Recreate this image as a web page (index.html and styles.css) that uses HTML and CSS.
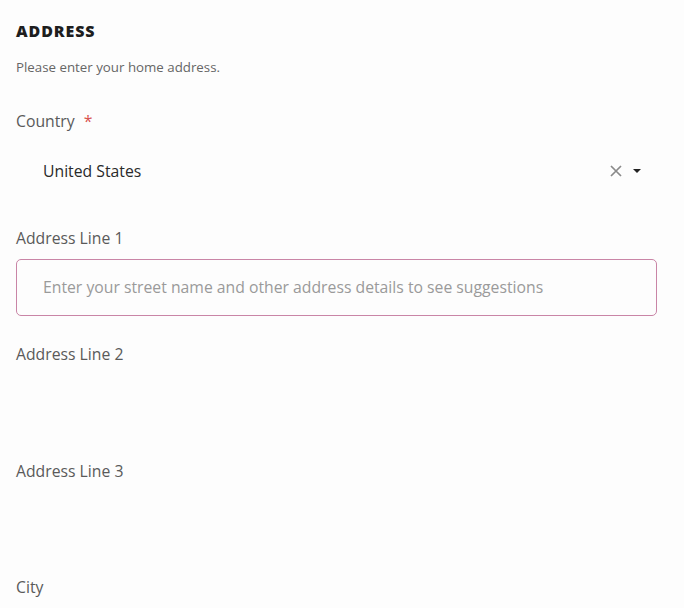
FILE: index.html
```html
<!DOCTYPE html>
<html lang="en">
<head>
<meta charset="utf-8">
<title>Address</title>
<link rel="stylesheet" href="styles.css">
</head>
<body>
<main class="form">
  <h2 class="title">ADDRESS</h2>
  <p class="subtitle">Please enter your home address.</p>

  <div class="field">
    <label class="label">Country <span class="req">*</span></label>
    <div class="control select">
      <span class="value">United States</span>
      <span class="icons">
        <svg class="clear" width="14" height="14" viewBox="0 0 14 14"><path d="M2 2 L12 12 M12 2 L2 12" stroke="#8a8a8a" stroke-width="1.7" fill="none"/></svg>
        <svg class="caret" width="10" height="6" viewBox="0 0 10 6"><path d="M1 1 L9 1 L5 5 Z" fill="#222"/></svg>
      </span>
    </div>
  </div>

  <div class="field">
    <label class="label">Address Line 1</label>
    <div class="control input focused">
      <span class="placeholder">Enter your street name and other address details to see suggestions</span>
    </div>
  </div>

  <div class="field">
    <label class="label">Address Line 2</label>
    <div class="control input"></div>
  </div>

  <div class="field">
    <label class="label">Address Line 3</label>
    <div class="control input"></div>
  </div>

  <div class="field">
    <label class="label">City</label>
    <div class="control input"></div>
  </div>
</main>
</body>
</html>
```
FILE: styles.css
```css
html, body {
  margin: 0;
  padding: 0;
  background: #fdfdfd;
}
body {
  font-family: "Open Sans", "Noto Sans", sans-serif;
  color: #333;
}
.form {
  padding: 20px 27px 0 16px;
}
.title {
  margin: 0;
  font-family: "Open Sans", sans-serif;
  font-weight: 800;
  font-size: 16px;
  line-height: 22px;
  color: #1e1e1e;
  letter-spacing: 0.9px;
}
.subtitle {
  margin: 16px 0 0;
  font-size: 13.3px;
  line-height: 19px;
  color: #666;
}
.field {
  display: flex;
  flex-direction: column;
}
.subtitle + .field {
  margin-top: 33px;
}
.field + .field {
  margin-top: 27.5px;
}
.label {
  font-size: 15.75px;
  line-height: 22px;
  color: #5a5a5a;
}
.req {
  color: #d9534f;
  margin-left: 5px;
}
.control {
  margin-top: 10px;
  height: 57px;
  box-sizing: border-box;
  border: 1px solid transparent;
  border-radius: 5px;
  display: flex;
  align-items: center;
  padding: 0 14px 0 26px;
  font-size: 15.75px;
}
.input.focused {
  border-color: #c985a6;
}
.placeholder {
  color: #9a9a9a;
}
.select .value {
  flex: 1;
  color: #2a2a2a;
}
.icons {
  display: flex;
  align-items: center;
  gap: 9px;
}
.clear {
  display: block;
}
.caret {
  display: block;
}
```
